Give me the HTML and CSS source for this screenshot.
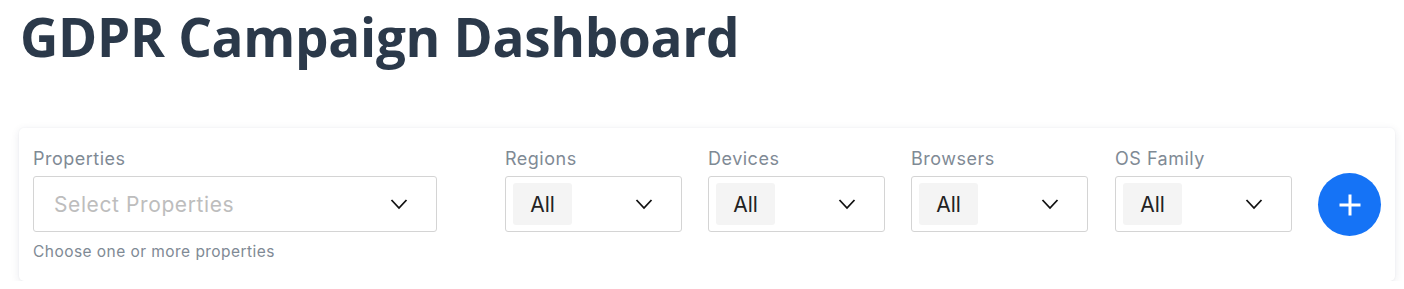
FILE: index.html
```html
<!DOCTYPE html>
<html lang="en">
<head>
<meta charset="utf-8">
<title>GDPR Campaign Dashboard</title>
<link rel="stylesheet" href="styles.css">
</head>
<body>
<h1 class="title">GDPR Campaign Dashboard</h1>
<div class="card">
  <div class="field field-props">
    <div class="label">Properties</div>
    <div class="select">
      <span class="placeholder">Select Properties</span>
      <svg class="chev" viewBox="0 0 18 12" width="18" height="12"><path d="M1.5 2 L9 10 L16.5 2" fill="none" stroke="#111" stroke-width="1.8"/></svg>
    </div>
    <div class="help">Choose one or more properties</div>
  </div>
  <div class="field">
    <div class="label">Regions</div>
    <div class="select"><span class="chip">All</span><svg class="chev" viewBox="0 0 18 12" width="18" height="12"><path d="M1.5 2 L9 10 L16.5 2" fill="none" stroke="#111" stroke-width="1.8"/></svg></div>
  </div>
  <div class="field">
    <div class="label">Devices</div>
    <div class="select"><span class="chip">All</span><svg class="chev" viewBox="0 0 18 12" width="18" height="12"><path d="M1.5 2 L9 10 L16.5 2" fill="none" stroke="#111" stroke-width="1.8"/></svg></div>
  </div>
  <div class="field">
    <div class="label">Browsers</div>
    <div class="select"><span class="chip">All</span><svg class="chev" viewBox="0 0 18 12" width="18" height="12"><path d="M1.5 2 L9 10 L16.5 2" fill="none" stroke="#111" stroke-width="1.8"/></svg></div>
  </div>
  <div class="field field-os">
    <div class="label">OS Family</div>
    <div class="select"><span class="chip">All</span><svg class="chev" viewBox="0 0 18 12" width="18" height="12"><path d="M1.5 2 L9 10 L16.5 2" fill="none" stroke="#111" stroke-width="1.8"/></svg></div>
  </div>
  <button class="add" type="button" aria-label="Add filter">
    <svg viewBox="0 0 24 24" width="24" height="24"><path d="M12 1.5 V22.5 M1.5 12 H22.5" stroke="#fff" stroke-width="3" fill="none"/></svg>
  </button>
</div>
</body>
</html>
```
FILE: styles.css
```css
html, body {
  margin: 0;
  padding: 0;
  background: #ffffff;
}
body {
  padding: 0 9px 0 19px;
  font-family: "Inter", "Liberation Sans", sans-serif;
}
.title {
  margin: 0 0 54px 1px;
  font-family: "Open Sans", sans-serif;
  font-weight: 700;
  font-size: 53px;
  color: #2b394a;
  line-height: 74px;
  letter-spacing: -0.3px;
}
.card {
  display: flex;
  align-items: flex-start;
  gap: 26px;
  width: 1376px;
  box-sizing: border-box;
  padding: 19px 14px 19px 14px;
  background: #fff;
  border-radius: 5px;
  box-shadow: 0 2px 8px rgba(40, 50, 90, 0.10), 0 0 2px rgba(40, 50, 90, 0.06);
}
.field {
  width: 177px;
  flex: none;
  display: flex;
  flex-direction: column;
}
.field-props {
  width: 404px;
  margin-right: 42px;
}
.field-os {
  margin-left: 1px;
}
.label {
  font-size: 18px;
  line-height: 24px;
  letter-spacing: 0.5px;
  color: #7f8a95;
  margin-bottom: 5px;
}
.select {
  height: 56px;
  box-sizing: border-box;
  border: 1px solid #d4d4d4;
  border-radius: 3px;
  display: flex;
  align-items: center;
  padding: 0 28px 0 7px;
  justify-content: space-between;
}
.field-props .select {
  padding: 0 28px 0 20px;
}
.placeholder {
  font-size: 21px;
  letter-spacing: 0.6px;
  color: #bdbdbd;
}
.chip {
  width: 59px;
  height: 42px;
  background: #f4f4f4;
  border-radius: 3px;
  display: flex;
  align-items: center;
  justify-content: center;
  font-size: 21px;
  color: #222;
}
.chev {
  display: block;
}
.help {
  margin-top: 10px;
  font-size: 15.5px;
  line-height: 20px;
  letter-spacing: 0.45px;
  color: #7f8a95;
}
.add {
  flex: none;
  margin-top: 26px;
  width: 63px;
  height: 63px;
  border-radius: 50%;
  border: none;
  padding: 0;
  background: #1573f6;
  display: flex;
  align-items: center;
  justify-content: center;
  cursor: pointer;
}
.add svg {
  display: block;
}
```
